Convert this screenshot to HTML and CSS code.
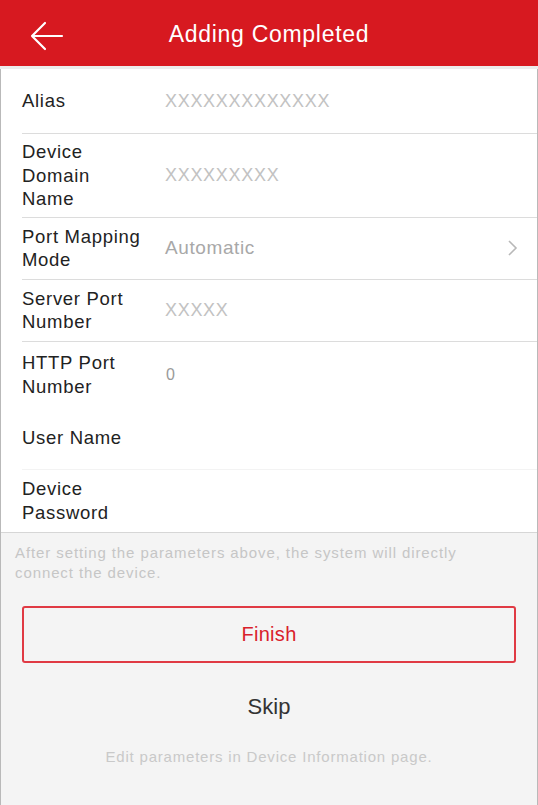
FILE: index.html
```html
<!DOCTYPE html>
<html>
<head>
<title>Adding Completed</title>
	<link rel="stylesheet" href="styles.css">
</head>
<body>
	<header class="topbar">
		<svg class="back" width="34" height="30" viewBox="0 0 34 30">
			<path d="M32 15 H2 M15 2 L2 15 L15 28" fill="none" stroke="#fff" stroke-width="2.2" stroke-linecap="round" stroke-linejoin="round"/>
		</svg>
		<h1>Adding Completed</h1>
	</header>

	<div class="page">
		<div class="form">
			<div class="row row-first">
				<div class="label">Alias</div>
				<div class="value mask">XXXXXXXXXXXXX</div>
			</div>
			<div class="row">
				<div class="label">Device<br>Domain<br>Name</div>
				<div class="value mask">XXXXXXXXX</div>
			</div>
			<div class="row">
				<div class="label">Port Mapping<br>Mode</div>
				<div class="value auto">Automatic</div>
				<svg class="chev" width="12" height="18" viewBox="0 0 12 18">
					<path d="M3 2 L10 9 L3 16" fill="none" stroke="#b8b8b8" stroke-width="1.6"/>
				</svg>
			</div>
			<div class="row">
				<div class="label">Server Port<br>Number</div>
				<div class="value mask">XXXXX</div>
			</div>
			<div class="row row-plain">
				<div class="label">HTTP Port<br>Number</div>
				<div class="value zero">0</div>
			</div>
			<div class="row row-faint">
				<div class="label">User Name</div>
				<div class="value"></div>
			</div>
			<div class="row row-last">
				<div class="label">Device<br>Password</div>
				<div class="value"></div>
			</div>
		</div>

		<p class="note">After setting the parameters above, the system will directly connect the device.</p>

		<div class="actions">
			<div class="btn-finish">Finish</div>
			<div class="btn-skip">Skip</div>
			<p class="hint">Edit parameters in Device Information page.</p>
		</div>
	</div>
</body>
</html>
```

FILE: styles.css
```css
	body{
		margin: 0;
		background-color: #f4f4f4;
		font-family: "Liberation Sans", Arial, sans-serif;
	}
	.topbar{
		height: 66px;
		background-color: #d71920;
		display: flex;
		align-items: center;
		justify-content: center;
		position: relative;
		border-bottom: 3px solid #ececec;
	}
	.back{
		position: absolute;
		left: 30px;
		top: 21px;
	}
	.topbar h1{
		margin: 0;
		color: #fff;
		font-weight: normal;
		font-size: 23px;
		letter-spacing: 0.7px;
		padding-top: 2px;
	}

	.page{
		border-left: 1px solid #b9b9b9;
		border-right: 1px solid #b9b9b9;
		min-height: 736px;
	}
	.form{
		background-color: #fff;
		border-bottom: 1px solid #d6d6d6;
	}
	.row{
		display: flex;
		align-items: center;
		box-sizing: border-box;
		min-height: 62px;
		margin-left: 21px;
		padding: 6px 20px 6px 0;
		border-bottom: 1px solid #dcdcdc;
	}
	.row-first{
		min-height: 65px;
	}
	.row-plain{
		min-height: 66px;
		border-bottom: none;
	}
	.row-faint{
		border-bottom: 1px solid #f3f3f3;
	}
	.row-last{
		border-bottom: none;
	}
	.label{
		width: 143px;
		flex: none;
		font-size: 18.5px;
		line-height: 23.5px;
		color: #222;
		letter-spacing: 0.7px;
	}
	.value{
		flex: 1;
		font-size: 18px;
	}
	.mask{
		color: #c2c2c2;
		letter-spacing: 0.7px;
	}
	.auto{
		color: #a8a8a8;
		font-size: 19px;
		letter-spacing: 0.6px;
	}
	.zero{
		color: #9a9a9a;
		font-size: 16px;
		padding-left: 1px;
	}
	.chev{
		flex: none;
		margin-right: -1px;
	}

	.note{
		margin: 0;
		padding: 10px 50px 0 14px;
		font-size: 15px;
		line-height: 20px;
		color: #c6c6c6;
		letter-spacing: 0.9px;
	}
	.actions{
		padding: 23px 21px 0;
		display: flex;
		flex-direction: column;
		align-items: stretch;
	}
	.btn-finish{
		height: 57px;
		box-sizing: border-box;
		border: 2px solid #e03a44;
		border-radius: 3px;
		display: flex;
		align-items: center;
		justify-content: center;
		color: #d9202b;
		font-size: 20px;
		letter-spacing: 0.3px;
	}
	.btn-skip{
		margin-top: 31px;
		text-align: center;
		font-size: 22px;
		color: #333;
		line-height: 26px;
	}
	.hint{
		margin: 28px 0 0;
		text-align: center;
		font-size: 15px;
		color: #c9c9c9;
		letter-spacing: 0.8px;
	}
```
